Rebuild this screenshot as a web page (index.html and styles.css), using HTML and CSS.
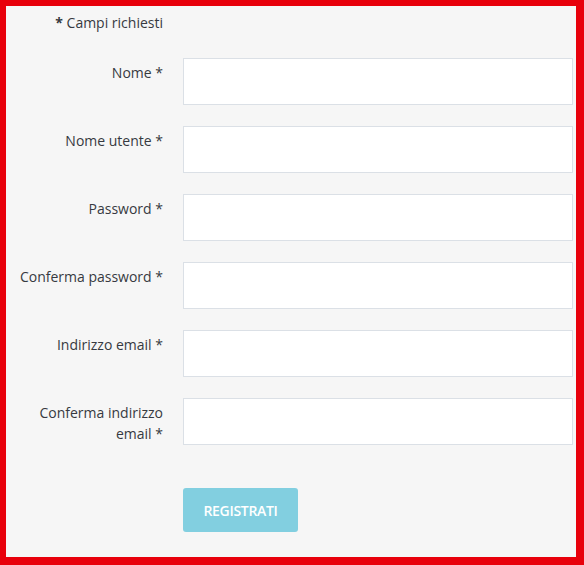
FILE: index.html
```html
<!DOCTYPE html>
<html lang="it">
<head>
<meta charset="utf-8">
<link rel="stylesheet" href="styles.css">
</head>
<body>
<form class="frame">
  <p class="required-note"><span class="star">*</span> Campi richiesti</p>
  <div class="row">
    <label class="label">Nome *</label>
    <input class="field" type="text">
  </div>
  <div class="row">
    <label class="label">Nome utente *</label>
    <input class="field" type="text">
  </div>
  <div class="row">
    <label class="label">Password *</label>
    <input class="field" type="password">
  </div>
  <div class="row">
    <label class="label">Conferma password *</label>
    <input class="field" type="password">
  </div>
  <div class="row">
    <label class="label">Indirizzo email *</label>
    <input class="field" type="email">
  </div>
  <div class="row">
    <label class="label">Conferma indirizzo email *</label>
    <input class="field" type="email">
  </div>
  <div class="actions">
    <button class="submit" type="button">Registrati</button>
  </div>
</form>
</body>
</html>
```
FILE: styles.css
```css
html, body {
  margin: 0;
  padding: 0;
}
body {
  width: 584px;
  height: 565px;
  font-family: "Open Sans", "Noto Sans", sans-serif;
  font-size: 14px;
  color: #363a41;
}
.frame {
  box-sizing: border-box;
  width: 584px;
  height: 565px;
  background: #f6f6f6;
  border-style: solid;
  border-color: #e8000b;
  border-width: 6px 8px 8px 6px;
  padding: 0;
  margin: 0;
}
.required-note {
  margin: 0;
  width: 157px;
  text-align: right;
  padding-top: 6px;
  line-height: 21px;
  height: 52px;
  box-sizing: border-box;
}
.star {
  font-weight: 700;
}
.row {
  display: flex;
  align-items: flex-start;
  gap: 20px;
  margin-bottom: 21px;
}
.label {
  width: 157px;
  flex: none;
  text-align: right;
  line-height: 21px;
  padding-top: 4px;
  box-sizing: border-box;
}
.field {
  box-sizing: border-box;
  width: 390px;
  height: 47px;
  margin: 0;
  background: #fff;
  border: 1px solid #dbe0e6;
  border-radius: 0;
  outline: none;
}
.actions {
  padding-left: 177px;
  padding-top: 22px;
}
.submit {
  width: 115px;
  height: 44px;
  border: none;
  border-radius: 3px;
  background: #82cfe0;
  color: #fff;
  font-family: "Open Sans", "Noto Sans", sans-serif;
  font-size: 14px;
  font-weight: 600;
  text-transform: uppercase;
  letter-spacing: -0.3px;
  padding: 0;
}
```
